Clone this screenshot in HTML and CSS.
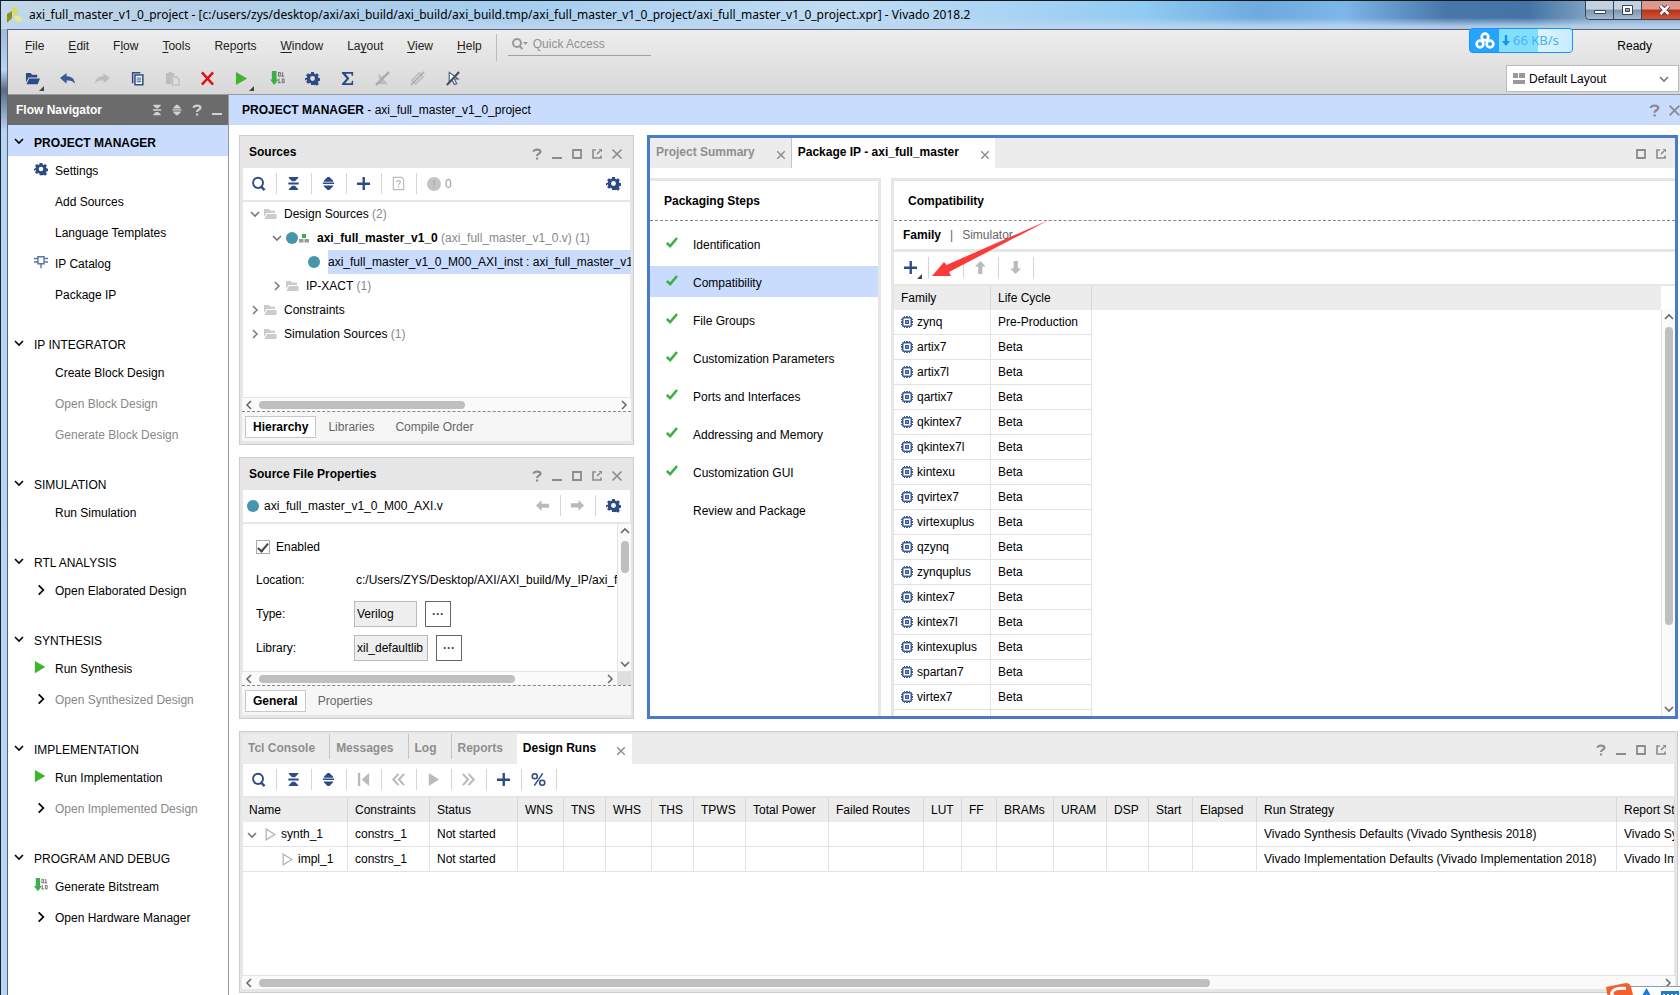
FILE: index.html
```
<!DOCTYPE html>
<html lang="en">
<head>
<meta charset="utf-8">
<title>axi_full_master_v1_0_project - Vivado 2018.2</title>
<link rel="stylesheet" href="styles.css">
</head>
<body>
<svg class="defs" width="0" height="0" aria-hidden="true">
  <symbol id="gear" viewBox="0 0 16 16"><path fill-rule="evenodd" fill="currentColor" d="M6.500 1h3l.4 1.900 1.200.5 1.700-1.100 2 2-1.100 1.700.5 1.200 1.800.4v2.800l-1.800.4-.5 1.200 1.100 1.700-2 2-1.700-1.100-1.200.5L9.500 15h-3l-.4-1.900-1.200-.5-1.700 1.100-2-2 1.100-1.700-.5-1.200L0 10.400V7.600l1.800-.4.5-1.200-1.100-1.700 2-2 1.700 1.100 1.200-.5zM8 5.400a2.600 2.600 0 1 0 0 5.200 2.600 2.600 0 0 0 0-5.200z"/></symbol>
  <symbol id="search" viewBox="0 0 16 16"><ellipse cx="7.500" cy="7.300" rx="5.300" ry="5.500" fill="none" stroke="currentColor" stroke-width="2"/><path d="M10.500 11l4 4" stroke="currentColor" stroke-width="2.600"/></symbol>
  <symbol id="collapse" viewBox="0 0 16 16"><path fill="currentColor" d="M3 1h10v1L9.500 5.500h-3L3 2zM2.500 7h11v2h-11zM3 15h10v-1l-3.500-3.500h-3L3 14z"/></symbol>
  <symbol id="expand" viewBox="0 0 16 16"><path fill="currentColor" d="M7 1h2l4 4v1H3V5zM2 7h12v1.500H2zM3 10h10v1l-4 4H7l-4-4z"/></symbol>
  <symbol id="plus" viewBox="0 0 16 16"><path fill="currentColor" d="M7 1h2.500v6H15v2.500H9.500V15H7V9.500H1V7h6z"/></symbol>
  <symbol id="help" viewBox="0 0 12 12"><path d="M2.500 3.800C2.500 .8 9.500 .8 9.500 3.800 9.500 5.800 6 5.500 6 8" fill="none" stroke="currentColor" stroke-width="2.200"/><path fill="currentColor" d="M5 9.500h2.200V11.500H5z"/></symbol>
  <symbol id="min" viewBox="0 0 12 12"><path fill="currentColor" d="M1 9h10v2H1z"/></symbol>
  <symbol id="max" viewBox="0 0 12 12"><path fill="none" stroke="currentColor" stroke-width="1.800" d="M2 2h8v8H2z"/></symbol>
  <symbol id="pop" viewBox="0 0 12 12"><path fill="none" stroke="currentColor" stroke-width="1.600" d="M5 2H2v8h8V7.500M6 6l3-3"/><path fill="currentColor" d="M7.500 1H11v3.500z"/></symbol>
  <symbol id="close" viewBox="0 0 12 12"><path fill="none" stroke="currentColor" stroke-width="1.700" d="M1.500 1.500l9 9M10.500 1.500l-9 9"/></symbol>
  <symbol id="down" viewBox="0 0 12 12"><path fill="none" stroke="currentColor" stroke-width="1.600" d="M2 4l4 4 4-4"/></symbol>
  <symbol id="up" viewBox="0 0 12 12"><path fill="none" stroke="currentColor" stroke-width="1.600" d="M2 8l4-4 4 4"/></symbol>
  <symbol id="right" viewBox="0 0 12 12"><path fill="none" stroke="currentColor" stroke-width="1.500" d="M4 2l4 4-4 4"/></symbol>
  <symbol id="left" viewBox="0 0 12 12"><path fill="none" stroke="currentColor" stroke-width="1.500" d="M8 2L4 6l4 4"/></symbol>
  <symbol id="play" viewBox="0 0 16 16"><path fill="#3fb52e" d="M1 1l12 7-12 7z"/></symbol>
  <symbol id="bits" viewBox="0 0 16 16"><path fill="#3fae49" d="M2 0h5v9h2l-4.500 6L0 9h2z"/><g fill="none" stroke="#666" stroke-width="1"><path d="M9 1.500h2v4H9zM13.500 1.500v4.500M12 5.500h3M12.500 2h1M9.500 8v4.500M8.500 12.500h3M13 8.500h2v4h-2z"/></g></symbol>
  <symbol id="folder" viewBox="0 0 14 12"><path fill="#cbcbcb" d="M1 1h5l1 1.500h5V5H3.500L1 9zM4 6h9.500v5H1.500z"/></symbol>
  <symbol id="check" viewBox="0 0 12 12"><path d="M.8 6l3.400 3.200L11 1" fill="none" stroke="#3fae49" stroke-width="2.600"/></symbol>
  <symbol id="chip" viewBox="0 0 12 12"><path fill="#3c5a94" fill-rule="evenodd" d="M3 0h1v1h1V0h2v1h1V0h1v1h2v2h1v1h-1v1h1v2h-1v1h1v1h-1v2H9v1H8v-1H7v1H5v-1H4v1H3v-1H1V9H0V8h1V7H0V5h1V4H0V3h1V1h2zM2.500 2.500v7h7v-7z"/><path fill="#9db0d6" d="M1 1h1v1H1zM10 1h1v1h-1zM1 10h1v1H1zM10 10h1v1h-1z"/><path fill="#3c5a94" fill-rule="evenodd" d="M4 4h4v4H4zM5.400 5.400v1.200h1.200V5.400z"/></symbol>
  <symbol id="arrow" viewBox="0 0 16 16"><path fill="currentColor" d="M1 8l6-5.500V6h8v4.500H7v3.500z"/></symbol>
  <symbol id="tri" viewBox="0 0 10 12"><path fill="#fff" stroke="#b5b5b5" stroke-width="1.200" d="M1 1l8 5-8 5z"/></symbol>
</svg>

<header class="titlebar">
  <svg class="logo" viewBox="0 0 16 16"><path fill="#8f8f10" d="M0 7l5-3v7l-5 5z"/><path fill="#d9dc55" d="M4 1l5-1 2 5-3 4z"/><path fill="#e6e89a" d="M7 9l6 0 3 5-7 1z"/></svg>
  <h1 class="title">axi_full_master_v1_0_project - [c:/users/zys/desktop/axi/axi_build/axi_build/axi_build.tmp/axi_full_master_v1_0_project/axi_full_master_v1_0_project.xpr] - Vivado 2018.2</h1>
  <div class="winbtns">
    <button class="wb" aria-label="Minimize"><svg width="14" height="12"><path d="M1.500 6.500h11v3h-11z" fill="#fff" stroke="#3a4658"/></svg></button>
    <button class="wb" aria-label="Restore"><svg width="14" height="12"><path d="M1.500 1.500h10v9h-10zM4.500 4.500v3h4v-3z" fill="#fff" fill-rule="evenodd" stroke="#3a4658"/></svg></button>
    <button class="wb wb-close" aria-label="Close window"><svg width="14" height="12"><path d="M2.500 2l8 8M10.500 2l-8 8" stroke="#4a3038" stroke-width="4.500"/><path d="M2.500 2l8 8M10.500 2l-8 8" stroke="#fff" stroke-width="2.500"/></svg></button>
  </div>
</header>

<div class="app">
  <div class="topbar">
    <div class="menurow">
      <nav class="menus">
        <button><u>F</u>ile</button><button><u>E</u>dit</button><button>F<u>l</u>ow</button><button><u>T</u>ools</button><button>Rep<u>o</u>rts</button><button><u>W</u>indow</button><button>La<u>y</u>out</button><button><u>V</u>iew</button><button><u>H</u>elp</button>
      </nav>
      <label class="quick">
        <svg width="18" height="14"><circle cx="6" cy="6" r="4" fill="none" stroke="#999" stroke-width="2"/><path d="M8.500 9l3 3" stroke="#999" stroke-width="2"/><path d="M12 5h5l-2.500 3z" fill="#999"/></svg>
        <input type="text" placeholder="Quick Access" aria-label="Quick Access">
      </label>
      <span class="ready">Ready</span>
    </div>
    <div class="toolrow">
      <div class="tools">
        <button class="menu-mark" aria-label="Open"><svg viewBox="0 0 16 16"><path fill="#2c4a85" d="M1 2h5l1.500 2H13v3H4L1 12zM4.500 8H16l-2.500 6H1.500z"/></svg></button>
        <button aria-label="Undo"><svg viewBox="0 0 16 16"><path fill="#3c5a94" d="M0 7.500L7 2v3.500C12 5.500 15.500 8 16 13.500 13.500 10.500 11 10 7 10v3.500z"/></svg></button>
        <button aria-label="Redo"><svg viewBox="0 0 16 16"><path fill="#bdbdbd" d="M16 7.500L9 2v3.500C4 5.500 .5 8 0 13.500 2.500 10.500 5 10 9 10v3.500z"/></svg></button>
        <button aria-label="Copy"><svg viewBox="0 0 16 16"><path fill="none" stroke="#2c4a85" stroke-width="1.600" d="M11 1.800H2.800V13"/><path fill="#fff" stroke="#2c4a85" stroke-width="1.600" d="M5.300 4.300h8.400v10.400H5.300z"/><path stroke="#2c4a85" d="M7 7.500h5M7 9.500h5M7 11.500h5"/></svg></button>
        <button aria-label="Paste"><svg viewBox="0 0 16 16"><path fill="#bdbdbd" d="M1 2h3V1h3v1h3v3H7v9H1z"/><path fill="#ddd" stroke="#bdbdbd" stroke-width="1.400" d="M8 6h4l3 3v6H8z"/></svg></button>
        <button aria-label="Delete"><svg viewBox="0 0 16 16"><path stroke="#e60f0f" stroke-width="2.600" d="M2 1.500l12 13M14 1.500l-12 13"/></svg></button>
        <button class="menu-mark" aria-label="Run"><svg><use href="#play"/></svg></button>
        <button aria-label="Generate bitstream"><svg><use href="#bits"/></svg></button>
        <button aria-label="Settings"><svg><use href="#gear"/></svg></button>
        <button aria-label="Report"><svg viewBox="0 0 16 16"><path fill="#2c4a85" d="M2 1h12v4h-1.500L12 3H6l4 5-4.500 5H12l.8-2.500H14V15H2v-1.500L7 8 2 2.500z"/></svg></button>
        <button aria-label="Clear marks"><svg viewBox="0 0 16 16"><path fill="#bdbdbd" d="M3 2l3.500 4L11 4 9 9l5 5H2l3-4z"/><path stroke="#aaa" stroke-width="2.400" d="M15 1L1 15"/></svg></button>
        <button aria-label="Clear highlight"><svg viewBox="0 0 16 16"><path fill="none" stroke="#bdbdbd" stroke-width="1.800" d="M2 10l8-8 4 4-8 8z"/><path stroke="#b0b0b0" stroke-width="2" d="M15 1L1 15"/></svg></button>
        <button aria-label="Unselect"><svg viewBox="0 0 16 16"><path fill="#fff" stroke="#3c5a94" stroke-width="1.200" d="M4.500 1.500v11l3-3 2.500 5 2.500-1-2.500-5h4z"/><path stroke="#4b4b4b" stroke-width="2.200" d="M15 1L2 15"/></svg></button>
      </div>
      <div class="layout-pick">
        <svg width="12" height="11"><path fill="#999" d="M0 0h5v5H0zM6 0h6v5H6zM0 7h12v4H0z"/></svg>
        <select aria-label="Layout"><option>Default Layout</option></select>
        <svg class="ic12"><use href="#down"/></svg>
      </div>
    </div>
    <div class="netspeed">
      <span class="net-logo"><svg width="20" height="18" viewBox="0 0 20 18"><g fill="none" stroke="#fff" stroke-width="2.600"><circle cx="10" cy="5" r="3.400"/><circle cx="5" cy="12" r="3.400"/><circle cx="15" cy="12" r="3.400"/></g></svg></span>
      <span class="net-text"><svg width="8" height="12"><path d="M2.800 0h2.400v6H8l-4 5-4-5h2.800z" fill="#1296ea"/></svg>66 KB/s</span>
    </div>
  </div>

  <div class="main">
    <aside class="nav">
      <div class="nav-head"><h2>Flow Navigator</h2>
        <span class="acts"><button aria-label="Collapse all"><svg><use href="#collapse"/></svg></button><button aria-label="Expand all"><svg><use href="#expand"/></svg></button><button aria-label="Help"><svg><use href="#help"/></svg></button><button aria-label="Minimize"><svg><use href="#min"/></svg></button></span>
      </div>
      <section><h3 class="sel"><svg><use href="#down"/></svg>PROJECT MANAGER</h3>
        <ul><li><svg class="blue"><use href="#gear"/></svg><a href="#">Settings</a></li><li><a href="#">Add Sources</a></li><li><a href="#">Language Templates</a></li><li><svg viewBox="0 0 16 16"><path fill="none" stroke="#5a75aa" stroke-width="1.600" d="M4.500 2h7v8h-7zM0 4h4M0 8h4M12 4h4M12 8h4M8 10v5"/></svg><a href="#">IP Catalog</a></li><li><a href="#">Package IP</a></li></ul></section>
      <section><h3><svg><use href="#down"/></svg>IP INTEGRATOR</h3>
        <ul><li><a href="#">Create Block Design</a></li><li class="off"><a href="#">Open Block Design</a></li><li class="off"><a href="#">Generate Block Design</a></li></ul></section>
      <section><h3><svg><use href="#down"/></svg>SIMULATION</h3>
        <ul><li><a href="#">Run Simulation</a></li></ul></section>
      <section><h3><svg><use href="#down"/></svg>RTL ANALYSIS</h3>
        <ul><li><svg class="chev"><use href="#right"/></svg><a href="#">Open Elaborated Design</a></li></ul></section>
      <section><h3><svg><use href="#down"/></svg>SYNTHESIS</h3>
        <ul><li><svg><use href="#play"/></svg><a href="#">Run Synthesis</a></li><li class="off"><svg class="chev"><use href="#right"/></svg><a href="#">Open Synthesized Design</a></li></ul></section>
      <section><h3><svg><use href="#down"/></svg>IMPLEMENTATION</h3>
        <ul><li><svg><use href="#play"/></svg><a href="#">Run Implementation</a></li><li class="off"><svg class="chev"><use href="#right"/></svg><a href="#">Open Implemented Design</a></li></ul></section>
      <section><h3><svg><use href="#down"/></svg>PROGRAM AND DEBUG</h3>
        <ul><li><svg><use href="#bits"/></svg><a href="#">Generate Bitstream</a></li><li><svg class="chev"><use href="#right"/></svg><a href="#">Open Hardware Manager</a></li></ul></section>
    </aside>

    <div class="work">
      <div class="pm-head"><h2><b>PROJECT MANAGER</b> - axi_full_master_v1_0_project</h2>
        <span class="acts"><button aria-label="Help"><svg><use href="#help"/></svg></button><button aria-label="Close"><svg><use href="#close"/></svg></button></span></div>
      <div class="panels">

        <section class="panel sources">
          <div class="p-head"><h3>Sources</h3><span class="acts"><button aria-label="Help"><svg><use href="#help"/></svg></button><button aria-label="Minimize"><svg><use href="#min"/></svg></button><button aria-label="Maximize"><svg><use href="#max"/></svg></button><button aria-label="Float"><svg><use href="#pop"/></svg></button><button aria-label="Close"><svg><use href="#close"/></svg></button></span></div>
          <div class="tb"><button aria-label="Search"><svg><use href="#search"/></svg></button><button aria-label="Collapse all"><svg><use href="#collapse"/></svg></button><button aria-label="Expand all"><svg><use href="#expand"/></svg></button><button aria-label="Add"><svg><use href="#plus"/></svg></button><button class="dim" aria-label="Info"><svg viewBox="0 0 16 16"><path fill="none" stroke="currentColor" stroke-width="1.200" d="M2.500 1.500h9l2 2v11h-11z"/><path fill="none" stroke="currentColor" stroke-width="1.300" d="M6 6.500c0-2 4-2 4 0 0 1.500-2 1.500-2 3M8 11v1.500"/></svg></button><span class="count"><svg viewBox="0 0 14 14"><circle cx="7" cy="7" r="7" fill="#c4c4c4"/><path stroke="#b2b2b2" stroke-width="2" d="M7 3v5M7 9.500v2"/></svg>0</span><button class="end" aria-label="Settings"><svg><use href="#gear"/></svg></button></div>
          <ul class="tree">
            <li><svg class="ic12"><use href="#down"/></svg><svg class="fold"><use href="#folder"/></svg><span>Design Sources <i>(2)</i></span></li>
            <li class="l2"><svg class="ic12"><use href="#down"/></svg><svg class="mod" viewBox="0 0 24 12"><circle cx="6" cy="6" r="6" fill="#4795ac"/><path fill="#3fae49" d="M16 2h4v4h-4z"/><path fill="#999" d="M13 7h4.500v3.500H13zM18.500 7H23v3.500h-4.500z"/></svg><span><b>axi_full_master_v1_0</b> <i>(axi_full_master_v1_0.v) (1)</i></span></li>
            <li class="l3"><em class="dot"></em><span class="picked">axi_full_master_v1_0_M00_AXI_inst : axi_full_master_v1_0_M00_AXI</span></li>
            <li class="l2"><svg class="ic12"><use href="#right"/></svg><svg class="fold"><use href="#folder"/></svg><span>IP-XACT <i>(1)</i></span></li>
            <li><svg class="ic12"><use href="#right"/></svg><svg class="fold"><use href="#folder"/></svg><span>Constraints</span></li>
            <li><svg class="ic12"><use href="#right"/></svg><svg class="fold"><use href="#folder"/></svg><span>Simulation Sources <i>(1)</i></span></li>
          </ul>
          <div class="hs"><svg><use href="#left"/></svg><div class="track"><div style="width:58%"></div></div><svg><use href="#right"/></svg></div>
          <div class="tabs2"><button class="on">Hierarchy</button><button>Libraries</button><button>Compile Order</button></div>
        </section>

        <section class="panel props">
          <div class="p-head"><h3>Source File Properties</h3><span class="acts"><button aria-label="Help"><svg><use href="#help"/></svg></button><button aria-label="Minimize"><svg><use href="#min"/></svg></button><button aria-label="Maximize"><svg><use href="#max"/></svg></button><button aria-label="Float"><svg><use href="#pop"/></svg></button><button aria-label="Close"><svg><use href="#close"/></svg></button></span></div>
          <div class="tb"><span class="file"><em class="dot"></em>axi_full_master_v1_0_M00_AXI.v</span><button class="dim end" aria-label="Back"><svg><use href="#arrow"/></svg></button><button class="dim" aria-label="Forward"><svg class="flip"><use href="#arrow"/></svg></button><button class="last" aria-label="Settings"><svg><use href="#gear"/></svg></button></div>
          <div class="p-body">
            <div class="form">
              <label class="en"><input type="checkbox" checked>Enabled</label>
              <div class="fr"><span>Location:</span><span class="loc">c:/Users/ZYS/Desktop/AXI/AXI_build/My_IP/axi_full_master</span></div>
              <div class="fr"><label for="type">Type:</label><input id="type" class="w-type" value="Verilog" readonly><button aria-label="Choose type">···</button></div>
              <div class="fr"><label for="lib">Library:</label><input id="lib" class="w-lib" value="xil_defaultlib" readonly><button aria-label="Choose library">···</button></div>
            </div>
            <div class="vs"><svg><use href="#up"/></svg><div class="track"><div style="height:28%"></div></div><svg><use href="#down"/></svg></div>
          </div>
          <div class="hs hs-corner"><svg><use href="#left"/></svg><div class="track"><div style="width:75%"></div></div><svg><use href="#right"/></svg></div>
          <div class="tabs2"><button class="on">General</button><button>Properties</button></div>
        </section>

        <section class="ip">
          <div class="tabs"><button>Project Summary<svg class="x"><use href="#close"/></svg></button><button class="on">Package IP - axi_full_master<svg class="x"><use href="#close"/></svg></button>
            <span class="acts"><button aria-label="Maximize"><svg><use href="#max"/></svg></button><button aria-label="Float"><svg><use href="#pop"/></svg></button></span></div>
          <div class="ip-body">
            <div class="steps"><h4>Packaging Steps</h4>
              <ol><li><svg><use href="#check"/></svg>Identification</li><li class="sel"><svg><use href="#check"/></svg>Compatibility</li><li><svg><use href="#check"/></svg>File Groups</li><li><svg><use href="#check"/></svg>Customization Parameters</li><li><svg><use href="#check"/></svg>Ports and Interfaces</li><li><svg><use href="#check"/></svg>Addressing and Memory</li><li><svg><use href="#check"/></svg>Customization GUI</li><li><svg></svg>Review and Package</li></ol>
            </div>
            <div class="compat"><h4>Compatibility</h4>
              <div class="sub"><button class="on">Family</button><span>|</span><button>Simulator</button></div>
              <div class="tb"><button class="menu-mark" aria-label="Add family"><svg><use href="#plus"/></svg></button><button class="dim" aria-label="Remove family"></button><button class="dim" aria-label="Move up"><svg class="rot"><use href="#arrow"/></svg></button><button class="dim" aria-label="Move down"><svg class="rotd"><use href="#arrow"/></svg></button></div>
              <div class="fam">
                <div class="fam-main"><table>
                  <thead><tr><th>Family</th><th>Life Cycle</th></tr></thead>
                  <tbody>
                  <tr><td><svg><use href="#chip"/></svg>zynq</td><td>Pre-Production</td></tr>
                  <tr><td><svg><use href="#chip"/></svg>artix7</td><td>Beta</td></tr>
                  <tr><td><svg><use href="#chip"/></svg>artix7l</td><td>Beta</td></tr>
                  <tr><td><svg><use href="#chip"/></svg>qartix7</td><td>Beta</td></tr>
                  <tr><td><svg><use href="#chip"/></svg>qkintex7</td><td>Beta</td></tr>
                  <tr><td><svg><use href="#chip"/></svg>qkintex7l</td><td>Beta</td></tr>
                  <tr><td><svg><use href="#chip"/></svg>kintexu</td><td>Beta</td></tr>
                  <tr><td><svg><use href="#chip"/></svg>qvirtex7</td><td>Beta</td></tr>
                  <tr><td><svg><use href="#chip"/></svg>virtexuplus</td><td>Beta</td></tr>
                  <tr><td><svg><use href="#chip"/></svg>qzynq</td><td>Beta</td></tr>
                  <tr><td><svg><use href="#chip"/></svg>zynquplus</td><td>Beta</td></tr>
                  <tr><td><svg><use href="#chip"/></svg>kintex7</td><td>Beta</td></tr>
                  <tr><td><svg><use href="#chip"/></svg>kintex7l</td><td>Beta</td></tr>
                  <tr><td><svg><use href="#chip"/></svg>kintexuplus</td><td>Beta</td></tr>
                  <tr><td><svg><use href="#chip"/></svg>spartan7</td><td>Beta</td></tr>
                  <tr><td><svg><use href="#chip"/></svg>virtex7</td><td>Beta</td></tr>
                  <tr><td></td><td></td></tr>
                  </tbody></table></div>
                <div class="vs"><svg><use href="#up"/></svg><div class="track"><div style="height:80%"></div></div><svg><use href="#down"/></svg></div>
              </div>
              <svg class="pointer" viewBox="0 0 117 56"><path fill="#fb3b38" d="M0 56l12-14 2.500 3L117 0 17 52l2 4z"/></svg>
            </div>
          </div>
        </section>

        <section class="panel runs">
          <div class="tabs"><button>Tcl Console</button><button>Messages</button><button>Log</button><button>Reports</button><button class="on">Design Runs<svg class="x"><use href="#close"/></svg></button>
            <span class="acts"><button aria-label="Help"><svg><use href="#help"/></svg></button><button aria-label="Minimize"><svg><use href="#min"/></svg></button><button aria-label="Maximize"><svg><use href="#max"/></svg></button><button aria-label="Float"><svg><use href="#pop"/></svg></button></span></div>
          <div class="tb"><button aria-label="Search"><svg><use href="#search"/></svg></button><button aria-label="Collapse all"><svg><use href="#collapse"/></svg></button><button aria-label="Expand all"><svg><use href="#expand"/></svg></button><button class="dim" aria-label="First"><svg viewBox="0 0 16 16"><path fill="currentColor" d="M2 1h2.500v14H2zM14 1v14L6 8z"/></svg></button><button class="dim" aria-label="Previous"><svg viewBox="0 0 16 16"><path fill="none" stroke="currentColor" stroke-width="2.200" d="M8 2L2.500 8 8 14M14 2L8.500 8l5.500 6"/></svg></button><button class="dim" aria-label="Play"><svg viewBox="0 0 16 16"><path fill="currentColor" d="M3 1l11 7-11 7z"/></svg></button><button class="dim" aria-label="Next"><svg viewBox="0 0 16 16"><path fill="none" stroke="currentColor" stroke-width="2.200" d="M2 2l5.500 6L2 14M8 2l5.500 6L8 14"/></svg></button><button aria-label="Add run"><svg><use href="#plus"/></svg></button><button aria-label="Percentage"><svg viewBox="0 0 16 16"><g fill="none" stroke="currentColor" stroke-width="1.600"><circle cx="4" cy="4.500" r="2.700"/><circle cx="12" cy="11.500" r="2.700"/><path d="M12.500 1.500l-9 13"/></g></svg></button></div>
          <div class="runs-body"><table>
            <colgroup><col class="c106"><col class="c82"><col class="c88"><col class="c46"><col class="c42"><col class="c46"><col class="c42"><col class="c52"><col class="c83"><col class="c95"><col class="c38"><col class="c35"><col class="c57"><col class="c53"><col class="c42"><col class="c44"><col class="c64"><col class="c360"><col></colgroup>
            <thead><tr><th>Name</th><th>Constraints</th><th>Status</th><th>WNS</th><th>TNS</th><th>WHS</th><th>THS</th><th>TPWS</th><th>Total Power</th><th>Failed Routes</th><th>LUT</th><th>FF</th><th>BRAMs</th><th>URAM</th><th>DSP</th><th>Start</th><th>Elapsed</th><th>Run Strategy</th><th>Report Strategy</th></tr></thead>
            <tbody>
            <tr><td class="n1"><svg class="ic12"><use href="#down"/></svg><svg class="tri"><use href="#tri"/></svg>synth_1</td><td>constrs_1</td><td>Not started</td><td></td><td></td><td></td><td></td><td></td><td></td><td></td><td></td><td></td><td></td><td></td><td></td><td></td><td></td><td>Vivado Synthesis Defaults (Vivado Synthesis 2018)</td><td>Vivado Synthesis</td></tr>
            <tr><td class="n2"><svg class="tri"><use href="#tri"/></svg>impl_1</td><td>constrs_1</td><td>Not started</td><td></td><td></td><td></td><td></td><td></td><td></td><td></td><td></td><td></td><td></td><td></td><td></td><td></td><td></td><td>Vivado Implementation Defaults (Vivado Implementation 2018)</td><td>Vivado Implementation</td></tr>
            </tbody></table></div>
          <div class="hs"><svg><use href="#left"/></svg><div class="track"><div style="width:68%"></div></div><svg><use href="#right"/></svg></div>
        </section>
      </div>
    </div>
  </div>
</div>
<div class="ime"><svg width="76" height="16" viewBox="0 0 76 16"><path fill="#fff" stroke="#8a9bb5" d="M22 4.500h70v20H22z"/><path fill="#f4602d" d="M2 5L22 1q4 0 5 4l3 12H4z"/><path fill="none" stroke="#fff" stroke-width="3" d="M22 6.500q-12-1-14 4t12 5"/><path fill="none" stroke="#1d7ad0" stroke-width="3" d="M38 17l4.500-8 4.500 8"/><path fill="#1d7ad0" d="M57 9h18v8H57z"/><path stroke="#fff" stroke-dasharray="2 2" d="M59 12.500h14"/></svg></div>
</body>
</html>
```
FILE: styles.css
```
* { box-sizing: border-box; }
body {
  margin: 0; height: 100vh; overflow: hidden;
  display: flex; flex-direction: column;
  font: 12px/16px "Liberation Sans", Arial, sans-serif; color: #000;
  background: linear-gradient(180deg, #8fa9c4 0, #b9d3f3 70px, #5b6b80 90px, #b7d3f6 130px, #b9d6f9 100%);
  border-left: 1px solid #1c2430; border-top: 1px solid #101820;
}
h1, h2, h3, h4, ul, ol { margin: 0; padding: 0; font-size: inherit; font-weight: normal; list-style: none; }
button, input, select { font: inherit; color: inherit; background: none; border: 0; padding: 0; margin: 0; outline: 0; }
svg { display: block; flex: none; }
a { color: inherit; text-decoration: none; }
.defs { position: absolute; }
.ic12 { width: 12px; height: 12px; color: #777; }

.titlebar {
  flex: none; height: 28px; display: flex; align-items: center; padding-left: 6px;
  background:
    linear-gradient(180deg, rgba(190,214,240,0) 60%, rgba(190,214,240,.85) 90%),
    linear-gradient(90deg, #c3d8e8 0, #b4cfe6 12%, #a5cdee 30%, #c0dcf3 50%, #a9d4f4 60%, #90cbf3 68%, #6fa9de 75%, #7db6e8 80%, #4878aa 86%, #4474a5 91%, #86a8c8 95%, #86a8c8 100%);
}
.logo { width: 16px; height: 16px; margin-right: 6px; }
.title { flex: 1; min-width: 0; overflow: hidden; white-space: nowrap; font: 12px/20px "Noto Sans", sans-serif; }
.winbtns { display: flex; align-self: flex-start; height: 19px; border: 1px solid #33445c; border-top: 0; border-right: 0; border-radius: 0 0 0 5px; overflow: hidden; }
.wb { width: 28px; display: grid; place-items: center; background: linear-gradient(180deg, #c3d2e2 45%, #7f94ac 50%, #a5bbd2); border-right: 1px solid #33445c; }
.wb-close { width: 38px; padding-left: 8px; background: linear-gradient(180deg, #dd9a8c 45%, #b8301a 50%, #d4563a); border-right: 0; }

.app { flex: 1; min-height: 0; margin-left: 6px; display: flex; flex-direction: column; border-left: 1px solid #56657a; border-top: 1px solid #56657a; background: #fff; }
.topbar { flex: none; position: relative; height: 65px; background: linear-gradient(180deg, #ededed, #d8d8d8); border-bottom: 1px solid #999; }
.menurow { display: flex; height: 32px; align-items: center; padding-right: 28px; }
.menus { display: flex; gap: 24px; padding: 0 14px 2px 17px; height: 27px; margin-top: 2px; align-items: center; border-right: 1px solid #bbb; }
.menus button { color: #222; }
.menus u { text-underline-offset: 2px; }
.quick { display: flex; align-items: center; gap: 4px; width: 143px; height: 24px; margin: 0 0 4px 11px; padding-left: 3px; border-bottom: 1px solid #a0a0a0; }
.quick input { width: 110px; }
.quick input::placeholder { color: #909090; opacity: 1; }
.ready { margin-left: auto; }
.toolrow { display: flex; height: 32px; justify-content: space-between; align-items: center; padding: 0 1px 0 7px; }
.tools { display: flex; }
.tools button { width: 35px; height: 30px; display: grid; place-items: center; color: #2c4a85; position: relative; }
.tools svg { width: 15px; height: 15px; }
.menu-mark { position: relative; }
.menu-mark::after { content: ""; position: absolute; right: 6px; bottom: 2px; border-left: 5px solid transparent; border-bottom: 5px solid #444; }
.layout-pick { display: flex; align-items: center; width: 173px; height: 27px; padding: 0 8px 0 6px; gap: 4px; background: #fff; border: 1px solid #bbb; margin-top: 1px; }
.layout-pick select { flex: 1; appearance: none; }
.netspeed { position: absolute; right: 107px; top: -2px; width: 104px; height: 25px; display: flex; border: 1px solid #1b90ff; border-radius: 4px; overflow: hidden; background: #24a3ff; font: 13px/23px "Noto Sans", sans-serif; color: #45b2f7; }
.net-logo { width: 29px; display: grid; place-items: center; }
.net-text { flex: 1; display: flex; align-items: center; gap: 3px; padding-left: 3px; background: linear-gradient(90deg, #82dfff 53%, #def4ff 53%, #c6ebff); }

.main { flex: 1; min-height: 0; display: flex; }
.nav { flex: none; width: 221px; border-right: 1px solid #999; overflow: hidden; }
.acts { display: flex; margin-left: auto; color: #8c8c8c; }
.acts button { width: 20px; height: 20px; display: grid; place-items: center; color: inherit; }
.acts svg { width: 12px; height: 12px; }
.nav-head { display: flex; align-items: center; height: 30px; padding: 0 1px 0 8px; background: #6b6b6b; color: #fff; }
.nav-head h2 { font-weight: bold; }
.nav-head .acts { color: #d2d2d2; }
.nav section { margin-bottom: 16px; }
.nav h3 { display: flex; align-items: center; height: 31px; padding: 4px 0 0 5px; }
.nav h3 svg { width: 12px; height: 12px; margin: 0 9px 4px 0; }
.nav h3.sel { background: #c9dcfd; font-weight: bold; }
.nav li { display: grid; grid-template-columns: 14px 1fr; column-gap: 7px; align-items: center; height: 31px; padding: 0 0 2px 26px; }
.nav li a { grid-column: 2; }
.nav li svg { width: 14px; height: 14px; margin-bottom: 3px; }
.nav li .chev { width: 14px; height: 14px; margin-bottom: 2px; }
.blue { color: #2c4a85; }
.off { color: #888; }
.off .chev { color: #000; }

.work { flex: 1; min-width: 0; display: flex; flex-direction: column; }
.pm-head { flex: none; display: flex; align-items: center; height: 30px; padding: 0 0 0 13px; background: #c9dcfd; }
.pm-head .acts { margin-right: -4px; }
.pm-head .acts svg { width: 13px; height: 13px; }
.panels {
  flex: 1; min-height: 0; display: grid; padding: 10px 2px 2px 10px; column-gap: 13px; row-gap: 12px;
  grid-template: "s ip" minmax(0, 310fr) "p ip" minmax(0, 262fr) "r r" minmax(0, 262fr) / minmax(0, 395fr) minmax(0, 1031fr);
}
.panel { display: flex; flex-direction: column; min-width: 0; min-height: 0; background: #fff; border: 1px solid #cdcdcd; box-shadow: inset 0 0 0 3px #e6e6e6; padding: 2px 2px 3px; }
.sources { grid-area: s; }
.props { grid-area: p; }
.runs { grid-area: r; }
.p-head { flex: none; display: flex; align-items: center; height: 30px; padding: 0 4px 0 7px; background: #e6e6e6; }
.p-head h3 { font-weight: bold; padding-bottom: 3px; }
.p-head .acts { margin-top: 2px; }
.tb { flex: none; display: flex; align-items: center; height: 34px; padding-bottom: 1px; border-bottom: 2px solid #e6e6e6; }
.tb button { width: 35px; height: 21px; display: grid; place-items: center; color: #2c4a85; padding-right: 1px; border-right: 1px solid #d5d5d5; }
.tb svg { width: 15px; height: 15px; }
.tb .dim { color: #bababa; }
.tb .end { margin-left: auto; }
.sources .end, .tb .last { border: 0; padding: 0; }
.tb .menu-mark::after { right: 6px; bottom: -1px; }
.count { display: flex; align-items: center; gap: 4px; padding-left: 10px; color: #999; }
.tb .count svg { width: 14px; height: 14px; }
.file { display: flex; align-items: center; gap: 5px; padding-left: 5px; }
.dot { flex: none; width: 12px; height: 12px; border-radius: 50%; background: #4795ac; }
.flip { transform: rotate(180deg); }
.rot { transform: rotate(90deg); }
.rotd { transform: rotate(270deg); }
.tree { flex: 1; min-height: 0; overflow: hidden; }
.tree li { display: flex; align-items: center; height: 24px; padding-left: 7px; white-space: nowrap; overflow: hidden; }
.tree .l2 { padding-left: 29px; }
.tree .l3 { padding-left: 66px; }
.tree i { font-style: normal; color: #888; }
.fold { width: 14px; height: 12px; margin: 0 7px 0 2px; }
.mod { width: 24px; height: 12px; margin: 0 7px 0 3px; }
.picked { flex: 1; margin-left: 8px; line-height: 24px; background: #c9dcfd; }
.hs { flex: none; display: flex; align-items: center; height: 14px; padding: 0 1px; background: #fafafa; border-top: 1px solid #e4e4e4; color: #666; }
.hs svg, .vs svg { width: 12px; height: 12px; }
.track { flex: 1; margin: 0 4px; }
.track div { height: 8px; border-radius: 4px; background: #bfbfbf; }
.hs-corner { border-right: 14px solid #dedede; }
.vs { flex: none; display: flex; flex-direction: column; align-items: center; width: 14px; background: #fafafa; border-left: 1px solid #e4e4e4; color: #666; padding: 1px 0; }
.vs .track { margin: 4px 0; }
.vs .track div { width: 8px; }
.tabs2 { flex: none; display: flex; align-items: center; height: 30px; padding-left: 3px; background: #f6f6f6; border-top: 1px dashed #888; color: #666; }
.tabs2 button { height: 22px; padding: 0 7px; margin-right: 5px; border: 1px solid transparent; }
.tabs2 .on { font-weight: bold; color: #000; background: #fff; border-color: #c8c8c8; margin-right: 4px; }

.p-body { flex: 1; min-height: 0; display: flex; }
.form { flex: 1; min-width: 0; padding: 14px 0 0 14px; overflow: hidden; white-space: nowrap; }
.en { display: flex; align-items: center; gap: 6px; height: 18px; margin-bottom: 7px; }
.en input { appearance: none; width: 14px; height: 14px; border: 1px solid #aaa; background: #fff; display: grid; place-items: center; }
.en input:checked::before { content: ""; width: 4px; height: 9px; border: solid #444; border-width: 0 2px 2px 0; transform: rotate(40deg); margin-bottom: 3px; }
.fr { display: grid; grid-template-columns: 98px max-content max-content; align-items: center; height: 34px; }
.loc { padding-left: 2px; }
.fr input { height: 26px; padding: 0 2px; background: #eee; border: 1px solid #bbb; }
.w-type { width: 63px; }
.w-lib { width: 74px; }
.fr button { width: 26px; height: 26px; margin-left: 8px; border: 1px solid #666; color: #444; font-weight: bold; }

.tabs { flex: none; display: flex; height: 30px; background: #ececec; color: #8e8e8e; }
.tabs > button { display: flex; align-items: center; padding: 0 14px 2px 6px; font-weight: bold; white-space: nowrap; }
.tabs > button + button:not(.on) { border-left: 1px solid #c4c4c4; background: #ececec; height: 25px; padding: 3px 14px 0 6px; }
.tabs > .on { background: #fff; color: #000; padding-right: 6px; }
.tabs .x { width: 10px; height: 10px; margin: 5px 0 0 20px; color: #8c8c8c; }
.tabs .acts { margin-top: 6px; margin-right: 4px; }
.ip { grid-area: ip; display: flex; flex-direction: column; min-width: 0; min-height: 0; border: 3px solid #4a7ace; background: #fff; }
.ip .tabs > button { padding-right: 5px; }
.ip .tabs > .on { border-left: 1px solid #c4c4c4; }
.ip .x { margin-left: 21px; }
.ip-body { flex: 1; min-height: 0; display: grid; grid-template-columns: minmax(0, 231fr) minmax(0, 784fr); column-gap: 10px; padding-top: 10px; }
.steps { border: solid #e6e6e6; border-width: 3px 3px 0 0; }
.ip h4 { height: 40px; padding: 12px 14px 0; font-weight: bold; border-bottom: 1px dashed #888; }
.steps ol { padding-top: 7px; display: grid; row-gap: 7px; }
.steps li { display: flex; align-items: center; gap: 15px; height: 31px; padding: 2px 0 0 16px; }
.steps li svg { width: 12px; height: 12px; margin-bottom: 4px; }
.steps .sel { background: #c9dcfd; }
.compat { position: relative; display: flex; flex-direction: column; min-height: 0; border: solid #e6e6e6; border-width: 3px 0 0 3px; }
.compat h4 { flex: none; }
.sub { flex: none; display: flex; align-items: center; gap: 9px; height: 31px; padding-left: 9px; border-bottom: 3px solid #e6e6e6; color: #666; }
.sub .on { font-weight: bold; color: #000; }
.fam { flex: 1; min-height: 0; display: flex; }
.fam-main { flex: 1; min-width: 0; overflow: hidden; background: linear-gradient(180deg, #ececec 24px, #fff 24px); }
.fam .vs { margin-top: 24px; }
table { border-collapse: separate; border-spacing: 0; table-layout: fixed; }
th, td { height: 25px; padding: 0 7px; text-align: left; font-weight: normal; white-space: nowrap; overflow: hidden; border: solid #e2e2e2; border-width: 0 1px 1px 0; }
th { height: 24px; background: #ececec; border-bottom: 0; border-color: #d8d8d8; }
.fam table { width: 198px; }
.fam th:first-child { width: 97px; }
td svg { display: inline-block; vertical-align: middle; }
.fam td svg { width: 12px; height: 12px; margin: 0 4px 2px 0; }
.pointer { position: absolute; left: 38px; top: 39px; width: 117px; height: 56px; }

.runs-body { flex: 1; min-height: 0; overflow: hidden; }
.runs table { width: 100%; }
.runs .n1 { padding-left: 4px; }
.runs .n2 { padding-left: 40px; }
.n1 .ic12 { margin-right: 7px; }
.tri { width: 11px; height: 13px; margin-right: 5px; }
.c106 { width: 106px; } .c82 { width: 82px; } .c88 { width: 88px; } .c46 { width: 46px; }
.c42 { width: 42px; } .c52 { width: 52px; } .c83 { width: 83px; } .c95 { width: 95px; }
.c38 { width: 38px; } .c35 { width: 35px; } .c57 { width: 57px; } .c53 { width: 53px; }
.c44 { width: 44px; } .c64 { width: 64px; } .c360 { width: 360px; }
.ime { position: fixed; right: 0; bottom: 0; width: 76px; height: 13px; overflow: hidden; }
```
